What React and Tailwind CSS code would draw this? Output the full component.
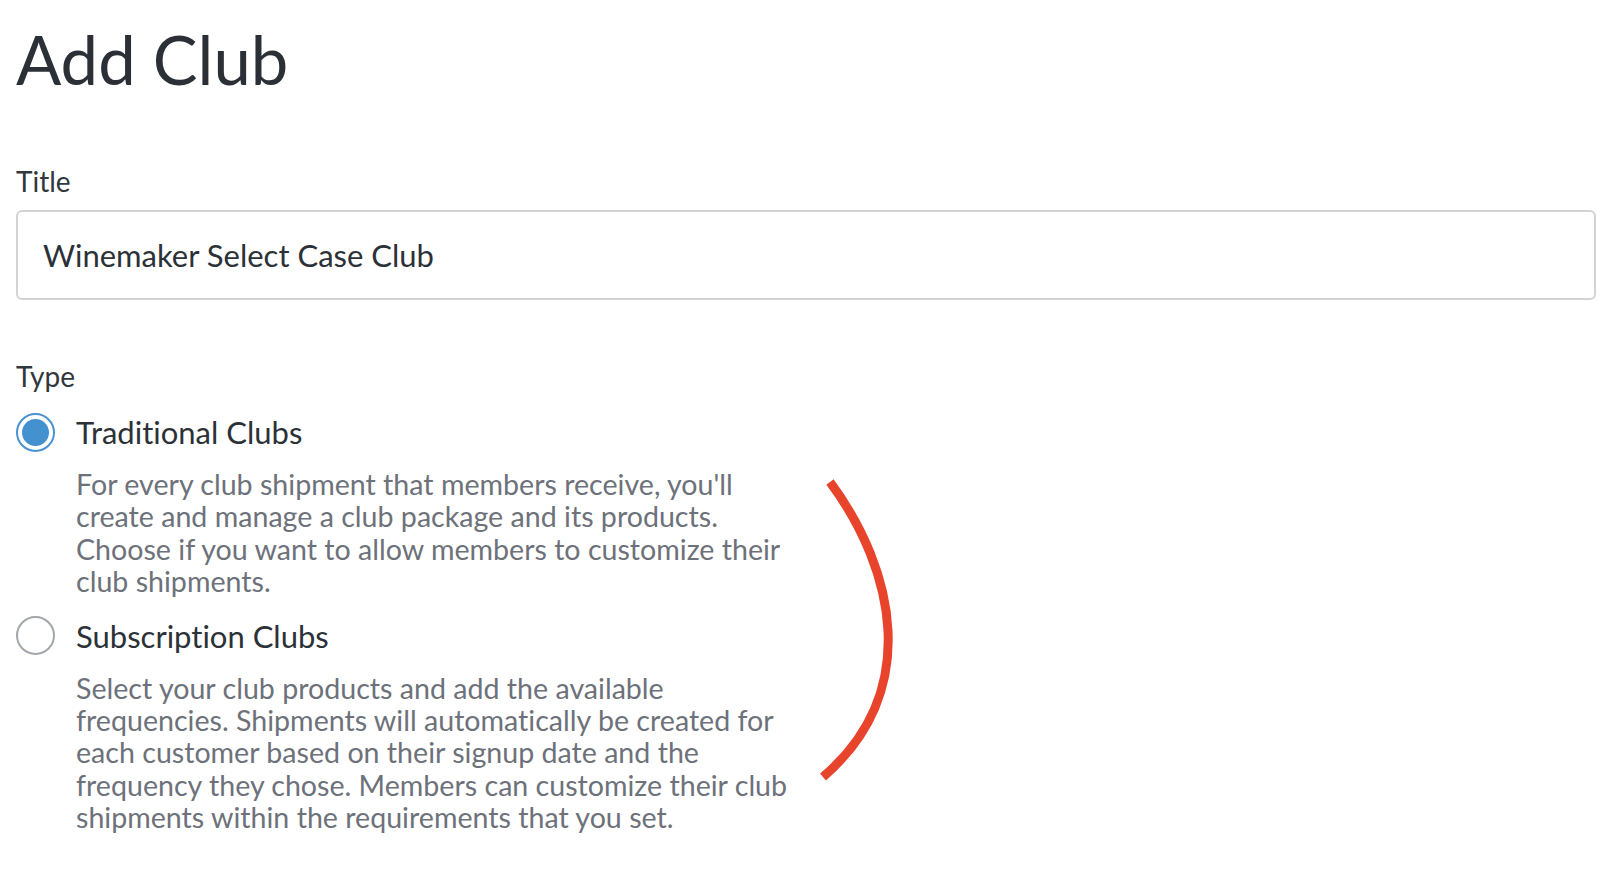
import React from "react";

function Radio({ checked }) {
  if (checked) {
    return (
      <span className="flex h-[39px] w-[39px] shrink-0 items-center justify-center rounded-full border-2 border-[#4a92d1] bg-white">
        <span className="h-[27px] w-[27px] rounded-full bg-[#4391cf]" />
      </span>
    );
  }
  return <span className="block h-[39px] w-[39px] shrink-0 rounded-full border-2 border-[#a3a7ab] bg-white" />;
}

function Option({ checked, label, desc }) {
  return (
    <div className="flex flex-col">
      <label className="flex h-[40px] items-center gap-[21px]">
        <Radio checked={checked} />
        <span className="text-[31px] leading-[40px] text-[#2b3137]">{label}</span>
      </label>
      <p className="mt-[16px] w-[787px] pl-[60px] text-[28.6px] leading-[32.4px] text-[#6d717a]">{desc}</p>
    </div>
  );
}

export default function App() {
  return (
    <div
      className="relative h-[876px] w-[1624px] overflow-hidden bg-white [font-variant-ligatures:none]"
      style={{ fontFamily: "Lato, 'Noto Sans', sans-serif" }}
    >
      <div className="flex flex-col pl-[16px] pr-[28px]">
        <h1 className="mt-[21px] text-[67px] font-normal leading-[76px] text-[#2a3036]">Add Club</h1>

        <div className="mt-[68px] text-[28px] leading-[32px] text-[#30373d]">Title</div>
        <div className="mt-[13px] flex h-[90px] items-center rounded-[6px] border-2 border-[#d3d3d3] pl-[25px] text-[31px] text-[#2b3137]">
          Winemaker Select Case Club
        </div>

        <div className="mt-[60px] text-[28px] leading-[32px] text-[#30373d]">Type</div>
        <div className="mt-[20px] flex flex-col gap-[18px]">
          <Option
            checked
            label="Traditional Clubs"
            desc="For every club shipment that members receive, you'll create and manage a club package and its products. Choose if you want to allow members to customize their club shipments."
          />
          <Option
            label="Subscription Clubs"
            desc="Select your club products and add the available frequencies. Shipments will automatically be created for each customer based on their signup date and the frequency they chose. Members can customize their club shipments within the requirements that you set."
          />
        </div>
      </div>

      <svg className="pointer-events-none absolute left-0 top-0" width="1624" height="876" viewBox="0 0 1624 876">
        <path d="M830 482 C 895 570, 922 692, 823 777" fill="none" stroke="#e8432b" strokeWidth="9" />
      </svg>
    </div>
  );
}
